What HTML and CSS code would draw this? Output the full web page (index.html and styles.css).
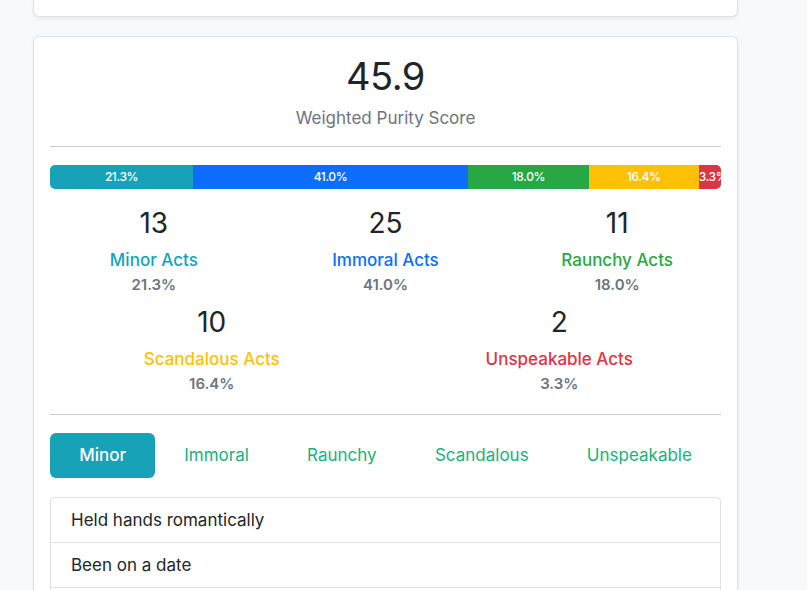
FILE: index.html
```html
<!DOCTYPE html>
<html lang="en">
<head>
<meta charset="utf-8">
<title>Purity Score</title>
<link rel="stylesheet" href="styles.css">
</head>
<body>
<main class="page">
  <div class="card card-top"></div>
  <section class="card">
    <div class="card-body">
      <div class="score">45.9</div>
      <div class="score-label">Weighted Purity Score</div>
      <hr class="rule">
      <div class="bar">
        <div class="seg seg-minor" style="width:21.3%">21.3%</div>
        <div class="seg seg-immoral" style="width:41.0%">41.0%</div>
        <div class="seg seg-raunchy" style="width:18.0%">18.0%</div>
        <div class="seg seg-scandalous" style="width:16.4%">16.4%</div>
        <div class="seg seg-unspeakable" style="width:3.3%">3.3%</div>
      </div>
      <div class="stats stats-three">
        <div class="stat">
          <div class="num">13</div>
          <div class="lbl c-minor">Minor Acts</div>
          <div class="pct">21.3%</div>
        </div>
        <div class="stat">
          <div class="num">25</div>
          <div class="lbl c-immoral">Immoral Acts</div>
          <div class="pct">41.0%</div>
        </div>
        <div class="stat">
          <div class="num">11</div>
          <div class="lbl c-raunchy">Raunchy Acts</div>
          <div class="pct">18.0%</div>
        </div>
      </div>
      <div class="stats stats-two">
        <div class="stat">
          <div class="num">10</div>
          <div class="lbl c-scandalous">Scandalous Acts</div>
          <div class="pct">16.4%</div>
        </div>
        <div class="stat">
          <div class="num">2</div>
          <div class="lbl c-unspeakable">Unspeakable Acts</div>
          <div class="pct">3.3%</div>
        </div>
      </div>
      <hr class="rule rule-tabs">
      <nav class="tabs">
        <a class="tab active">Minor</a>
        <a class="tab">Immoral</a>
        <a class="tab">Raunchy</a>
        <a class="tab">Scandalous</a>
        <a class="tab">Unspeakable</a>
      </nav>
      <ul class="list">
        <li class="item">Held hands romantically</li>
        <li class="item">Been on a date</li>
        <li class="item">Been in a relationship</li>
        <li class="item">Danced without leaving room for Jesus</li>
      </ul>
    </div>
  </section>
</main>
</body>
</html>
```

FILE: styles.css
```css
* { box-sizing: border-box; }

html, body {
  margin: 0;
  padding: 0;
  background: #f8f9fa;
  font-family: Inter, "Noto Sans", sans-serif;
  color: #212529;
}

.page {
  width: 705px;
  margin-left: 33px;
}

.card {
  background: #fff;
  border: 1px solid #dfe1e3;
  border-radius: 6px;
  box-shadow: 0 2px 4px rgba(0, 0, 0, 0.06);
}

.card-top {
  height: 17px;
  border-top: none;
  border-radius: 0 0 6px 6px;
  margin-bottom: 19px;
}

.card-body {
  padding: 16px;
}

.score {
  text-align: center;
  font-size: 38px;
  line-height: 46px;
  font-weight: 400;
  letter-spacing: -0.5px;
}

.score-label {
  text-align: center;
  margin-top: 7px;
  font-size: 17px;
  line-height: 25px;
  color: #6c757d;
}

.rule {
  border: 0;
  border-top: 1px solid #c9cbcd;
  margin: 15px 0 18px;
  height: 0;
}

.rule-tabs {
  margin: 19px 0 18px;
}

.bar {
  display: flex;
  height: 24px;
  border-radius: 5px;
  overflow: hidden;
}

.seg {
  color: #fff;
  font-size: 12px;
  line-height: 24px;
  font-weight: 500;
  text-align: center;
  white-space: nowrap;
  overflow: hidden;
  letter-spacing: -0.4px;
}

.seg-minor { background: #17a2b8; }
.seg-immoral { background: #0d6efd; }
.seg-raunchy { background: #28a745; }
.seg-scandalous { background: #ffc107; }
.seg-unspeakable { background: #dc3545; text-align: left; }

.stats {
  display: flex;
  margin: 0 -12px;
}

.stats-three { margin-top: 17px; }
.stats-two { margin-top: 9px; justify-content: space-around; }

.stat {
  flex: 0 0 33.3333%;
  text-align: center;
  padding: 0 12px;
}

.num {
  font-size: 28px;
  line-height: 34px;
  font-weight: 400;
}

.lbl {
  margin-top: 8px;
  font-size: 17px;
  line-height: 25px;
  font-weight: 500;
}

.pct {
  margin-top: 1px;
  font-size: 15px;
  line-height: 22px;
  font-weight: 600;
  color: #6c757d;
}

.c-minor { color: #17a2b8; }
.c-immoral { color: #0d6efd; }
.c-raunchy { color: #28a745; }
.c-scandalous { color: #ffc107; }
.c-unspeakable { color: #dc3545; }

.tabs {
  display: flex;
  margin-bottom: 19px;
}

.tab {
  flex: 1 1 auto;
  text-align: center;
  padding: 0 16px;
  height: 45px;
  line-height: 45px;
  font-size: 17px;
  color: #20b07c;
  border-radius: 6px;
}

.tab.active {
  background: #17a2b8;
  color: #fff;
  font-weight: 500;
}

.list {
  list-style: none;
  margin: 0;
  padding: 0;
  border: 1px solid #dee2e6;
  border-radius: 4px 4px 0 0;
}

.item {
  padding: 12px 20px;
  font-size: 17px;
  line-height: 20px;
  border-top: 1px solid #dee2e6;
  height: 45px;
}

.item:first-child {
  border-top: none;
  height: 44px;
}
```
